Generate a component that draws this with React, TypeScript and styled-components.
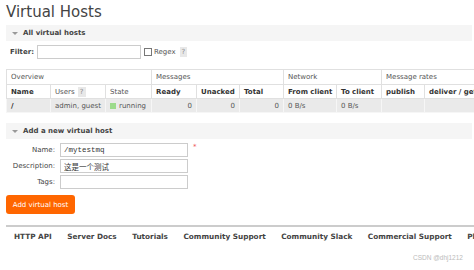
import styled, { createGlobalStyle } from 'styled-components';

const GlobalStyle = createGlobalStyle`
    html, body {
        margin: 0;
        padding: 0;
        background: #fff;
        overflow: hidden;
    }
    body {
        font-family: 'DejaVu Sans', Verdana, sans-serif;
        color: #484848;
    }
`
const Page = styled.div`
    width: 474px;
    height: 270px;
    padding-left: 6px;
    box-sizing: border-box;
    overflow: hidden;
    position: relative;
`
const Title = styled.h1`
    font-size: 15px;
    font-weight: normal;
    line-height: 20px;
    margin: 2px 0 3px 0;
    color: #444;
`
const SectionBar = styled.div<{ $mt?: number }>`
    display: flex;
    align-items: center;
    height: 16px;
    margin-top: ${p => p.$mt ?? 0}px;
    background: #f5f5f5;
    font-size: 7px;
    font-weight: bold;
    color: #444;
    gap: 5px;
    padding-left: 6px;
    width: 466px;
    box-sizing: border-box;
`
const Arrow = styled.span`
    width: 0;
    height: 0;
    border-left: 3px solid transparent;
    border-right: 3px solid transparent;
    border-top: 3px solid #999;
`
const FilterRow = styled.div`
    display: flex;
    align-items: center;
    height: 14px;
    margin-top: 4px;
    padding-left: 4px;
    font-size: 7px;
    font-weight: bold;
    color: #444;
`
const FilterLabel = styled.span`
    margin-right: 3px;
`
const TextInput = styled.input<{ $w: number }>`
    width: ${p => p.$w}px;
    height: 14px;
    box-sizing: border-box;
    border: 1px solid #ccc;
    padding: 0 3px;
    font-family: 'Liberation Mono', 'Noto Sans CJK SC', monospace;
    font-size: 7.5px;
    color: #333;
    outline: none;
    margin: 0;
`
const Check = styled.span`
    display: inline-block;
    width: 8px;
    height: 8px;
    border: 1px solid #777;
    box-sizing: border-box;
    margin: 0 2px 0 3px;
    background: #fff;
`
const Plain = styled.span`
    font-weight: normal;
    color: #555;
`
const Help = styled.span<{ $ml?: number }>`
    display: inline-block;
    background: #e8e8e8;
    color: #888;
    font-size: 7px;
    font-weight: normal;
    padding: 0 2px;
    line-height: 10px;
    margin-left: ${p => p.$ml ?? 4}px;
`
const Table = styled.table`
    border-collapse: collapse;
    margin-top: 10px;
    font-size: 7px;
    table-layout: fixed;
    width: 520px;
`
const GroupTh = styled.th`
    text-align: left;
    font-weight: normal;
    height: 14px;
    padding: 0 4px;
    border: 1px solid #e0e0e0;
    color: #555;
    white-space: nowrap;
`
const HeadTh = styled.th`
    text-align: left;
    font-weight: bold;
    height: 13px;
    padding: 0 4px;
    border: 1px solid #e0e0e0;
    color: #333;
    white-space: nowrap;
    & > span {
        font-weight: normal;
        color: #555;
    }
`
const DataTd = styled.td<{ $right?: boolean; $bold?: boolean }>`
    background: #eaeaea;
    height: 13px;
    padding: 0 4px;
    border: 1px solid #f6f6f6;
    text-align: ${p => (p.$right ? 'right' : 'left')};
    font-weight: ${p => (p.$bold ? 'bold' : 'normal')};
    color: ${p => (p.$bold ? '#222' : '#555')};
    white-space: nowrap;
`
const Dot = styled.span`
    display: inline-block;
    width: 6px;
    height: 6px;
    background: #9cdb8c;
    margin-right: 3px;
    vertical-align: -1px;
`
const Form = styled.div`
    display: grid;
    grid-template-columns: 49px 128px auto;
    column-gap: 5px;
    row-gap: 2px;
    align-items: center;
    margin-top: 4px;
    font-size: 7px;
    color: #444;
`
const Label = styled.label`
    text-align: right;
    line-height: 14px;
`
const Star = styled.span`
    color: #e55;
    font-size: 7px;
    align-self: start;
`
const AddButton = styled.button`
    margin-top: 6px;
    height: 19px;
    width: 69px;
    background: #ff6600;
    color: #fff;
    border: none;
    border-radius: 3px;
    font-family: 'DejaVu Sans', Verdana, sans-serif;
    font-size: 7px;
    padding: 0;
`
const Footer = styled.div`
    margin-top: 11px;
    border-top: 2px solid #ccc;
    display: flex;
    gap: 15.5px;
    padding: 5px 0 0 8px;
    font-size: 7.3px;
    font-weight: bold;
    color: #444;
    white-space: nowrap;
    width: 520px;
`
const Watermark = styled.div`
    position: absolute;
    left: 413px;
    top: 254px;
    font-size: 6.5px;
    color: #bbb;
    font-family: 'Liberation Sans', sans-serif;
`

function App() {
    return (
        <Page>
            <GlobalStyle />
            <Title>Virtual Hosts</Title>
            <SectionBar><Arrow />All virtual hosts</SectionBar>
            <FilterRow>
                <FilterLabel>Filter:</FilterLabel>
                <TextInput $w={104} readOnly value="" />
                <Check />
                <Plain>Regex</Plain>
                <Help>?</Help>
            </FilterRow>

            <Table>
                <colgroup>
                    <col style={{ width: 44 }} />
                    <col style={{ width: 55 }} />
                    <col style={{ width: 46 }} />
                    <col style={{ width: 45 }} />
                    <col style={{ width: 43 }} />
                    <col style={{ width: 44 }} />
                    <col style={{ width: 53 }} />
                    <col style={{ width: 45 }} />
                    <col style={{ width: 43 }} />
                    <col style={{ width: 102 }} />
                </colgroup>
                <thead>
                    <tr>
                        <GroupTh colSpan={3}>Overview</GroupTh>
                        <GroupTh colSpan={3}>Messages</GroupTh>
                        <GroupTh colSpan={2}>Network</GroupTh>
                        <GroupTh colSpan={2}>Message rates</GroupTh>
                    </tr>
                    <tr>
                        <HeadTh>Name</HeadTh>
                        <HeadTh><span>Users <Help $ml={1}>?</Help></span></HeadTh>
                        <HeadTh><span>State</span></HeadTh>
                        <HeadTh>Ready</HeadTh>
                        <HeadTh>Unacked</HeadTh>
                        <HeadTh>Total</HeadTh>
                        <HeadTh>From client</HeadTh>
                        <HeadTh>To client</HeadTh>
                        <HeadTh>publish</HeadTh>
                        <HeadTh>deliver / get</HeadTh>
                    </tr>
                </thead>
                <tbody>
                    <tr>
                        <DataTd $bold>/</DataTd>
                        <DataTd>admin, guest</DataTd>
                        <DataTd><Dot />running</DataTd>
                        <DataTd $right>0</DataTd>
                        <DataTd $right>0</DataTd>
                        <DataTd $right>0</DataTd>
                        <DataTd>0 B/s</DataTd>
                        <DataTd>0 B/s</DataTd>
                        <DataTd />
                        <DataTd />
                    </tr>
                </tbody>
            </Table>

            <SectionBar $mt={10}><Arrow />Add a new virtual host</SectionBar>
            <Form>
                <Label>Name:</Label>
                <TextInput $w={128} readOnly value="/mytestmq" />
                <Star>*</Star>
                <Label>Description:</Label>
                <TextInput $w={128} readOnly value="这是一个测试" />
                <span />
                <Label>Tags:</Label>
                <TextInput $w={128} readOnly value="" />
                <span />
            </Form>
            <AddButton>Add virtual host</AddButton>

            <Footer>
                <span>HTTP API</span>
                <span>Server Docs</span>
                <span>Tutorials</span>
                <span>Community Support</span>
                <span>Community Slack</span>
                <span>Commercial Support</span>
                <span>Plugins</span>
            </Footer>
            <Watermark>CSDN @dhj1212</Watermark>
        </Page>
    );
}

export default App;
